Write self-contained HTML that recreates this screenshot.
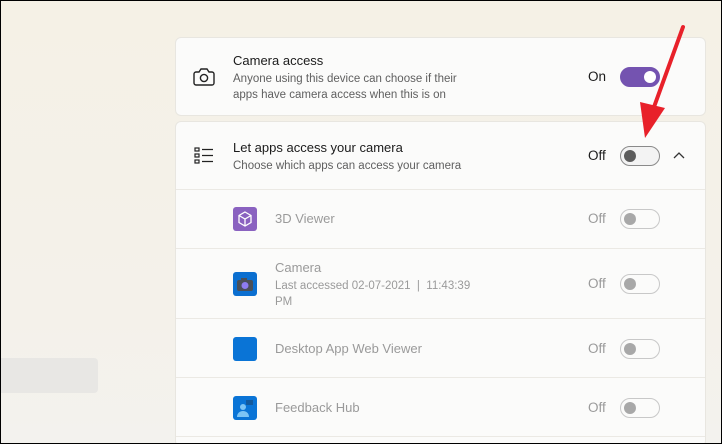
<!DOCTYPE html>
<html><head><style>
*{margin:0;padding:0;box-sizing:border-box}
html,body{width:722px;height:444px;overflow:hidden}
body{background:#f4f1e9;font-family:"Segoe UI","Liberation Sans",sans-serif;position:relative}
.bg{position:absolute;left:0;top:0;width:722px;height:444px;background:linear-gradient(180deg,#f5f1e6 0%,#f4f1ea 70%,#f3f2ee 100%)}
.frame{position:absolute;left:0;top:0;width:722px;height:444px;border:1px solid #000;pointer-events:none}
.side{position:absolute;left:0;top:358px;width:98px;height:35px;background:#e8e7e4;border-radius:0 4px 4px 0}
.card{position:absolute;left:175px;width:531px;background:#fbfbfa;border:1px solid #e8e6e0;border-radius:6px}
.t{position:absolute;font-size:13px;color:#1b1b1b}
.s{position:absolute;font-size:11.5px;color:#5f5f5f;line-height:16px}
.g{color:#9a9a9a}
.tog{position:absolute;width:40px;height:20px;border-radius:10px;border:1px solid #8a8a8a;background:#f3f3f3}
.tog::after{content:"";position:absolute;left:3px;top:3px;width:12px;height:12px;border-radius:50%;background:#5c5c5c}
.tog.dim{border-color:#c8c8c8;background:#fbfbfa}
.tog.dim::after{background:#a8a8a8}
.on{background:#7453b0;border-color:#7453b0}
.on::after{left:23px;background:#fff}
.lbl{position:absolute;font-size:13.5px}
.div{position:absolute;left:0;width:529px;height:1px;background:#ebe9e4}
.ic{position:absolute;left:57px;width:24px;height:24px;border-radius:3px}
</style></head><body>
<div class="bg"></div>
<div class="side"></div>
<div class="card" style="top:37px;height:79px">
 <svg style="position:absolute;left:17px;top:29px" width="22" height="20" viewBox="0 0 22 20"><path d="M3 5h3l2-3h6l2 3h3a2 2 0 0 1 2 2v9a2 2 0 0 1-2 2H3a2 2 0 0 1-2-2V7a2 2 0 0 1 2-2z" fill="none" stroke="#222" stroke-width="1.4"/><circle cx="11" cy="11" r="3.6" fill="none" stroke="#222" stroke-width="1.4"/></svg>
 <div class="t" style="left:57px;top:15px">Camera access</div>
 <div class="s" style="left:57px;top:33px">Anyone using this device can choose if their<br>apps have camera access when this is on</div>
 <div class="lbl" style="left:412px;top:31px;color:#1b1b1b">On</div>
 <div class="tog on" style="left:444px;top:29px"></div>
</div>
<div class="card" style="top:121px;height:326px">
 <svg style="position:absolute;left:18px;top:25px" width="20" height="18" viewBox="0 0 20 18"><g fill="none" stroke="#222" stroke-width="1.2"><rect x="1" y="1" width="4" height="3"/><rect x="1" y="7" width="4" height="3"/><rect x="1" y="13" width="4" height="3"/><path d="M8 2.5h11M8 8.5h11M8 14.5h11"/></g></svg>
 <div class="t" style="left:57px;top:18px">Let apps access your camera</div>
 <div class="s" style="left:57px;top:36px">Choose which apps can access your camera</div>
 <div class="lbl" style="left:412px;top:26px;color:#1b1b1b">Off</div>
 <div class="tog" style="left:444px;top:24px"></div>
 <svg style="position:absolute;left:497px;top:29px" width="12" height="8" viewBox="0 0 12 8"><path d="M1 7l5-5 5 5" fill="none" stroke="#333" stroke-width="1.3"/></svg>
 <div class="div" style="top:67px"></div>

 <div class="ic" style="top:85px;background:#8a62c0"><svg width="24" height="24" viewBox="0 0 24 24"><path d="M12 5l6 3.5v7L12 19l-6-3.5v-7zM6 8.5l6 3.5 6-3.5M12 12v7" fill="none" stroke="#fff" stroke-width="1.3"/></svg></div>
 <div class="t g" style="left:99px;top:89px">3D Viewer</div>
 <div class="lbl g" style="left:412px;top:89px">Off</div>
 <div class="tog dim" style="left:444px;top:87px"></div>
 <div class="div" style="top:126px"></div>

 <div class="ic" style="top:150px;background:#0b6fd0"><svg width="24" height="24" viewBox="0 0 24 24"><rect x="4" y="8" width="16" height="11" rx="2" fill="#4a4f58"/><rect x="8" y="6" width="6" height="3" fill="#4a4f58"/><circle cx="12" cy="13.5" r="3.5" fill="#8d7cf0"/></svg></div>
 <div class="t g" style="left:99px;top:138px">Camera</div>
 <div class="s g" style="left:99px;top:156px">Last accessed 02-07-2021 &nbsp;|&nbsp; 11:43:39<br>PM</div>
 <div class="lbl g" style="left:412px;top:154px">Off</div>
 <div class="tog dim" style="left:444px;top:152px"></div>
 <div class="div" style="top:196px"></div>

 <div class="ic" style="top:215px;background:#0a74d6"></div>
 <div class="t g" style="left:99px;top:219px">Desktop App Web Viewer</div>
 <div class="lbl g" style="left:412px;top:219px">Off</div>
 <div class="tog dim" style="left:444px;top:217px"></div>
 <div class="div" style="top:255px"></div>

 <div class="ic" style="top:274px;background:#0a74d6"><svg width="24" height="24" viewBox="0 0 24 24"><circle cx="10" cy="11" r="3" fill="#7cc4f5"/><path d="M4 21c0-4 3-6 6-6s6 2 6 6z" fill="#7cc4f5"/><rect x="13" y="4" width="7" height="5" fill="#135a9e"/></svg></div>
 <div class="t g" style="left:99px;top:278px">Feedback Hub</div>
 <div class="lbl g" style="left:412px;top:278px">Off</div>
 <div class="tog dim" style="left:444px;top:276px"></div>
 <div class="div" style="top:314px"></div>
</div>
<svg style="position:absolute;left:0;top:0" width="722" height="444"><path d="M683 27L650 118" stroke="#e8212a" stroke-width="4" stroke-linecap="round"/><path d="M640 102L645 138L665 108z" fill="#e8212a"/></svg>
<div class="frame"></div>
</body></html>
